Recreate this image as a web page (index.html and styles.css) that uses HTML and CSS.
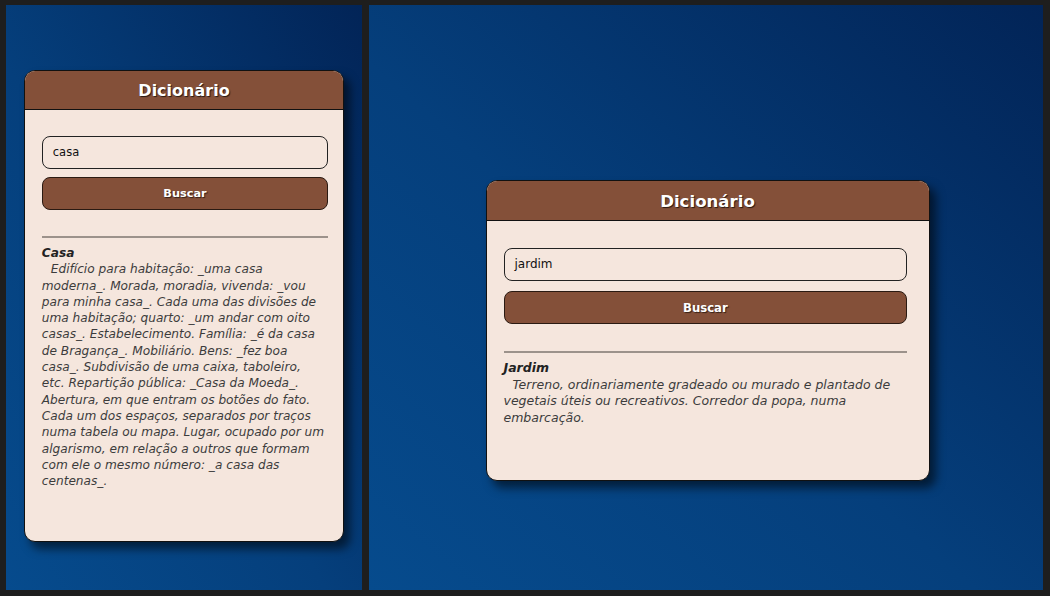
FILE: index.html
```html
<!DOCTYPE html>
<html lang="pt">
<head>
<meta charset="utf-8">
<title>Dicionário</title>
<link rel="stylesheet" href="styles.css">
</head>
<body>
<div class="frame">
  <section class="panel panel-narrow">
    <div class="card">
      <header class="card-head"><h1>Dicionário</h1></header>
      <div class="card-body">
        <div class="field">casa</div>
        <button class="btn">Buscar</button>
        <hr class="sep">
        <div class="result">
          <p class="term">Casa</p>
          <p class="def">Edifício para habitação: _uma casa moderna_. Morada, moradia, vivenda: _vou para minha casa_. Cada uma das divisões de uma habitação; quarto: _um andar com oito casas_. Estabelecimento. Família: _é da casa de Bragança_. Mobiliário. Bens: _fez boa casa_. Subdivisão de uma caixa, taboleiro, etc. Repartição pública: _Casa da Moeda_. Abertura, em que entram os botões do fato. Cada um dos espaços, separados por traços numa tabela ou mapa. Lugar, ocupado por um algarismo, em relação a outros que formam com ele o mesmo número: _a casa das centenas_.</p>
        </div>
      </div>
    </div>
  </section>
  <section class="panel panel-wide">
    <div class="card card-wide">
      <header class="card-head"><h1>Dicionário</h1></header>
      <div class="card-body">
        <div class="field">jardim</div>
        <button class="btn">Buscar</button>
        <hr class="sep">
        <div class="result">
          <p class="term">Jardim</p>
          <p class="def">Terreno, ordinariamente gradeado ou murado e plantado de vegetais úteis ou recreativos. Corredor da popa, numa embarcação.</p>
        </div>
      </div>
    </div>
  </section>
</div>
</body>
</html>
```

FILE: styles.css
```css
html, body {
  margin: 0;
  padding: 0;
  height: 100%;
}

body {
  background: #1e1e1e;
  font-family: "DejaVu Sans", Verdana, sans-serif;
}

.frame {
  display: flex;
  gap: 7px;
  height: 596px;
  box-sizing: border-box;
  padding: 5px 7px 6px 6px;
}

.panel {
  display: flex;
  justify-content: center;
  align-items: flex-start;
  box-sizing: border-box;
  background: linear-gradient(to top right, #064b8d 0%, #053f7c 45%, #022457 100%);
}

.panel-narrow {
  width: 356px;
  flex: none;
  padding-top: 65px;
}

.panel-wide {
  flex: 1;
  padding-top: 175px;
  padding-left: 3px;
}

.card {
  box-sizing: border-box;
  width: 90%;
  max-width: 444px;
  background: #f5e6dd;
  border: 1.5px solid #111;
  border-radius: 11px;
  overflow: hidden;
  box-shadow: 6px 7px 10px rgba(0, 0, 0, 0.55);
}

.card-head {
  background: #845039;
  border-bottom: 1.5px solid #111;
  padding: 11px 0 9px;
  text-align: center;
}

.card-head h1 {
  margin: 0;
  font-size: 16px;
  line-height: 18px;
  font-weight: bold;
  color: #fff;
  text-shadow: 1px 1px 1px rgba(0, 0, 0, 0.7);
}

.card-body {
  padding: 26px 0 52px 17px;
}

.field,
.btn,
.sep {
  width: 95%;
}

.result {
  width: 94.6%;
}

.field {
  box-sizing: border-box;
  height: 33px;
  border: 1px solid #222;
  border-radius: 8px;
  padding: 0 10px;
  font-size: 11.5px;
  line-height: 31px;
  color: #111;
  background: #f5e6dd;
}

.btn {
  display: block;
  box-sizing: border-box;
  height: 33px;
  margin-top: 8px;
  border: 1px solid #2a1a12;
  border-radius: 8px;
  background: #845039;
  color: #fff;
  font-family: "DejaVu Sans", Verdana, sans-serif;
  font-weight: bold;
  font-size: 11.3px;
  text-shadow: 1px 1px 1px rgba(0, 0, 0, 0.6);
  padding: 0;
}

.sep {
  margin: 26px 0 7px;
  border: 0;
  height: 2px;
  background: #9c928b;
}

.result {
  font-size: 12.15px;
  line-height: 16.3px;
  font-style: italic;
}

.term {
  margin: 0;
  font-weight: bold;
  color: #222;
}

.def {
  margin: 0;
  color: #3c3c3c;
  text-indent: 9px;
}

.card-wide .card-head {
  padding: 12px 0 9px;
}

.card-wide .card-head h1 {
  font-size: 16.6px;
}

.card-wide .card-body {
  padding: 27px 0 54px 17px;
}

.card-wide .field {
  font-size: 12px;
}

.card-wide .btn {
  margin-top: 10px;
  font-size: 11.7px;
}

.card-wide .sep {
  margin-top: 27px;
}

.card-wide .result {
  font-size: 12.5px;
  line-height: 16.5px;
}
```
